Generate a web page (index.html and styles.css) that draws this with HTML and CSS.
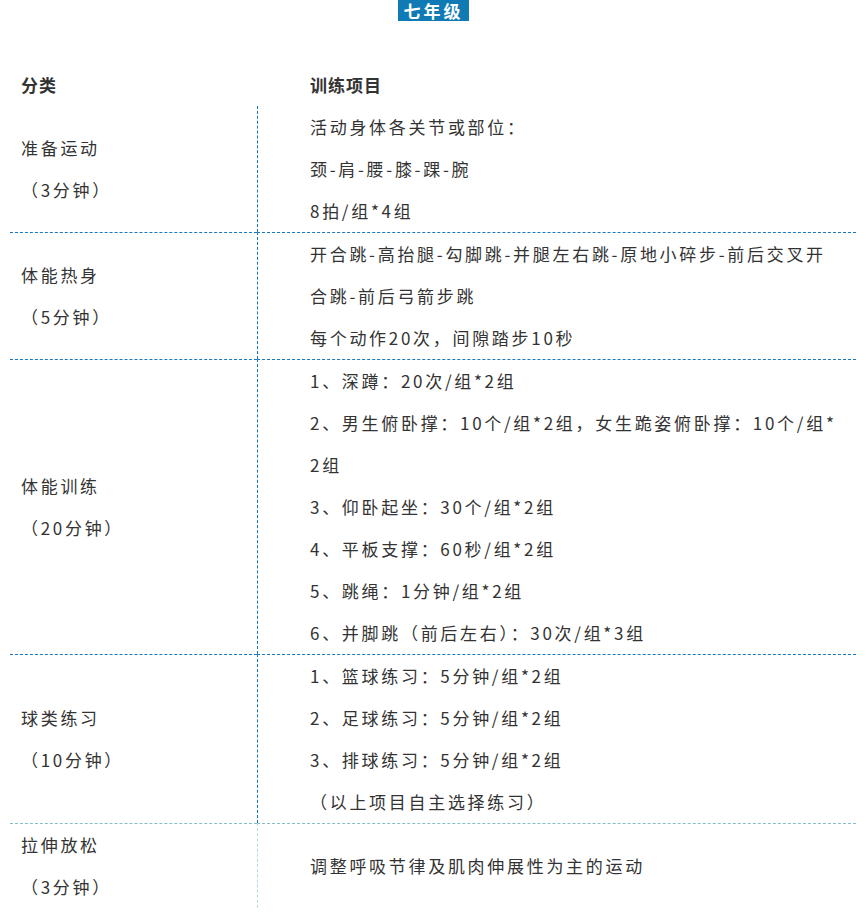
FILE: index.html
```html
<!DOCTYPE html>
<html lang="zh-CN">
<head>
<meta charset="utf-8">
<link rel="stylesheet" href="styles.css">
</head>
<body>
<div class="page">
  <div class="title-wrap"><span class="title">七年级</span></div>
  <div class="table">
    <div class="cell left head"><b>分类</b></div>
    <div class="cell right head"><b>训练项目</b></div>

    <div class="cell left">准备运动<br>（3分钟）</div>
    <div class="cell right vline">活动身体各关节或部位：<br>颈-肩-腰-膝-踝-腕<br>8拍/组*4组</div>

    <div class="cell left hline">体能热身<br>（5分钟）</div>
    <div class="cell right vline hline">开合跳-高抬腿-勾脚跳-并腿左右跳-原地小碎步-前后交叉开合跳-前后弓箭步跳<br>每个动作20次，间隙踏步10秒</div>

    <div class="cell left hline">体能训练<br>（20分钟）</div>
    <div class="cell right vline hline">1、深蹲：20次/组*2组<br>2、男生俯卧撑：10个/组*2组，女生跪姿俯卧撑：10个/组*2组<br>3、仰卧起坐：30个/组*2组<br>4、平板支撑：60秒/组*2组<br>5、跳绳：1分钟/组*2组<br>6、并脚跳（前后左右）：30次/组*3组</div>

    <div class="cell left hline">球类练习<br>（10分钟）</div>
    <div class="cell right vline hline">1、篮球练习：5分钟/组*2组<br>2、足球练习：5分钟/组*2组<br>3、排球练习：5分钟/组*2组<br>（以上项目自主选择练习）</div>

    <div class="cell left hline light">拉伸放松<br>（3分钟）</div>
    <div class="cell right vline-light hline light">调整呼吸节律及肌肉伸展性为主的运动</div>
  </div>
</div>
</body>
</html>
```

FILE: styles.css
```css
html, body {
  margin: 0;
  padding: 0;
  background: #ffffff;
}

.page {
  width: 866px;
  font-family: "Noto Sans CJK SC", "Microsoft YaHei", sans-serif;
  font-size: 17px;
  color: #333333;
}

.title-wrap {
  display: flex;
  justify-content: center;
  height: 21px;
  margin-bottom: 43px;
}

.title {
  display: block;
  background: #0f7ab4;
  color: #ffffff;
  font-weight: bold;
  font-size: 17px;
  line-height: 21px;
  height: 21px;
  padding: 0 5px 0 6px;
  letter-spacing: 3px;
}

.table {
  display: grid;
  grid-template-columns: 247px 599px;
  margin-left: 10px;
}

.cell {
  line-height: 42px;
  letter-spacing: 2.7px;
  word-break: break-all;
}

.left {
  padding-left: 11px;
  display: flex;
  align-items: center;
}

.right {
  padding-left: 53px;
  padding-right: 14px;
  display: flex;
  align-items: center;
}

.head {
  height: 42px;
}

.head b {
  font-weight: bold;
  letter-spacing: 1px;
}

.vline {
  border-left: 1px dashed #1273bf;
  padding-left: 52px;
}

.vline-light {
  border-left: 1px dashed #b3dbe2;
  padding-left: 52px;
}

.hline {
  border-top: 1px dashed #1a78c2;
}

.hline.light {
  border-top-color: #88bcc6;
}
```
